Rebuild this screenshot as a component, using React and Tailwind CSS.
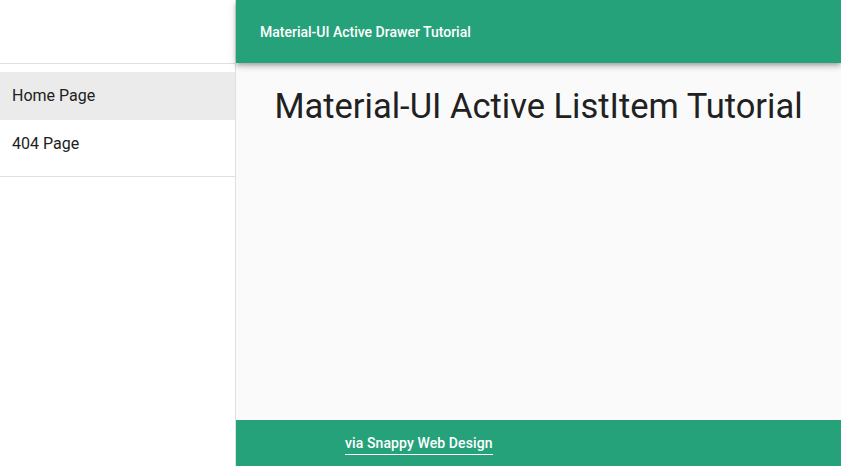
export default function App() {
  return (
    <div className="flex h-[466px] w-[841px] overflow-hidden bg-[#fafafa]" style={{ fontFamily: "Roboto, 'Liberation Sans', sans-serif" }}>
      <aside className="flex w-[236px] shrink-0 flex-col border-r border-[#e0e0e0] bg-white">
        <div className="h-16 border-b border-[#e0e0e0]" />
        <ul className="border-b border-[#e0e0e0] py-2">
          <li className="flex h-12 items-center bg-[#ebebeb] px-3 text-base text-[#212121]">Home Page</li>
          <li className="flex h-12 items-center px-3 text-base text-[#212121]">404 Page</li>
        </ul>
      </aside>
      <div className="flex min-w-0 flex-1 flex-col">
        <header className="relative z-10 flex h-[63px] shrink-0 items-center bg-[#26a27b] px-6 shadow-[0_2px_4px_-1px_rgba(0,0,0,0.2),0_4px_5px_0_rgba(0,0,0,0.14),0_1px_10px_0_rgba(0,0,0,0.12)]">
          <h6 className="text-sm font-medium text-white">Material-UI Active Drawer Tutorial</h6>
        </header>
        <main className="flex-1 pt-[23px] text-center">
          <h1 className="text-[34.5px] font-normal leading-[40px] text-[#212121]">Material-UI Active ListItem Tutorial</h1>
        </main>
        <footer className="flex h-[46px] shrink-0 items-center bg-[#26a27b] pl-[109px] pt-[3px]">
          <a className="border-b border-white pb-[3px] text-sm font-medium leading-4 tracking-[0.1px] text-white">via Snappy Web Design</a>
        </footer>
      </div>
    </div>
  );
}
